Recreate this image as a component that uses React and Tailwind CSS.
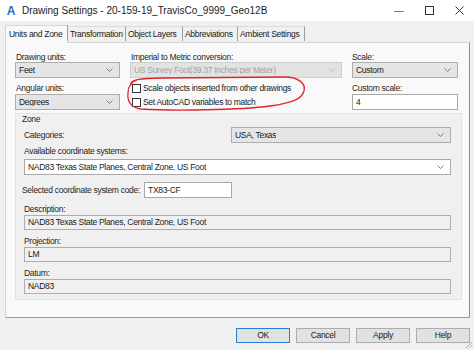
import React from "react";

const FONT = "font-['Liberation_Sans',Arial,sans-serif]";

function Chevron({ color = "#6d6d6d" }) {
  return (
    <svg width="7" height="4" viewBox="0 0 7 4" className="shrink-0">
      <path d="M0.5 0.5 L3.5 3.5 L6.5 0.5" fill="none" stroke={color} strokeWidth="0.9" />
    </svg>
  );
}

function Select({ value, className = "", disabled = false, white = false }) {
  const look = disabled
    ? "bg-[#e2e2e2] border-[#cfcfcf] text-[#a3a3a3]"
    : white
    ? "bg-white border-[#a9a9a9] text-[#1a1a1a]"
    : "bg-[#e5e5e5] border-[#adadad] text-[#1a1a1a]";
  return (
    <div className={`h-[16px] flex items-center justify-between pl-[3px] pr-[6px] border ${look} ${className}`}>
      <span className="leading-none whitespace-nowrap overflow-hidden">{value}</span>
      <Chevron color={disabled ? "#bdbdbd" : "#6d6d6d"} />
    </div>
  );
}

function Label({ children, className = "" }) {
  return <div className={`h-[10px] leading-[10px] whitespace-nowrap text-[#262626] ${className}`}>{children}</div>;
}

function ReadBox({ value }) {
  return (
    <div className="h-[15px] flex items-center pl-[3px] border border-[#adadad] bg-[#f0f0f0] text-[#1a1a1a] leading-none">
      {value}
    </div>
  );
}

function Checkbox({ label, className = "" }) {
  return (
    <div className={`h-[10px] flex items-center gap-[2px] ${className}`}>
      <div className="w-[9px] h-[9px] border border-[#333333] bg-white shrink-0" />
      <span className="leading-none whitespace-nowrap text-[#1a1a1a]">{label}</span>
    </div>
  );
}

function Tab({ label, selected, w }) {
  return selected ? (
    <div
      className={`${w} h-[18px] mb-[-1px] relative z-10 bg-[#f9f9f9] border-l border-t border-[#d6d6d6] flex items-center pl-[3px] text-[#1a1a1a] whitespace-nowrap`}
    >
      {label}
    </div>
  ) : (
    <div
      className={`${w} h-[15px] mb-[1px] border-t border-r border-t-[#dcdcdc] border-r-[#9c9c9c] flex items-center pl-[2px] text-[#1a1a1a] whitespace-nowrap`}
    >
      {label}
    </div>
  );
}

function Button({ label, primary }) {
  return (
    <div
      className={`w-[54px] h-[15px] flex items-center justify-center bg-[#e1e1e1] border leading-none text-[#1a1a1a] ${
        primary ? "border-[#2a7bd2]" : "border-[#adadad]"
      }`}
    >
      {label}
    </div>
  );
}

export default function App() {
  return (
    <div className={`relative w-[474px] h-[350px] overflow-hidden bg-[#f0f0f0] text-[8.5px] tracking-[-0.3px] ${FONT}`}>
      {/* Title bar */}
      <div className="h-[21px] bg-white flex items-center tracking-normal">
        <div className="w-[22px] flex justify-center">
          <span className="text-[12px] font-bold leading-none text-[#1f6cc4]">A</span>
        </div>
        <span className="text-[10px] leading-none text-[#1a1a1a] whitespace-nowrap">
          Drawing Settings - 20-159-19_TravisCo_9999_Geo12B
        </span>
        <div className="ml-auto flex items-center h-full">
          <div className="w-[30px] flex justify-center">
            <svg width="10" height="10" viewBox="0 0 10 10">
              <path d="M0 5.5 H10" stroke="#7a7a7a" strokeWidth="1" />
            </svg>
          </div>
          <div className="w-[30px] flex justify-center">
            <svg width="9" height="9" viewBox="0 0 9 9">
              <rect x="0.5" y="0.5" width="8" height="8" fill="none" stroke="#333" strokeWidth="1" />
            </svg>
          </div>
          <div className="w-[30px] flex justify-center">
            <svg width="9" height="9" viewBox="0 0 9 9">
              <path d="M0.5 0.5 L8.5 8.5 M8.5 0.5 L0.5 8.5" stroke="#333" strokeWidth="1" />
            </svg>
          </div>
        </div>
      </div>

      {/* Tabs */}
      <div className="h-[21px] pl-[5px] flex items-end">
        <Tab label="Units and Zone" selected w="w-[62px]" />
        <div className="w-px h-[16px] mb-[1px] bg-[#9c9c9c]" />
        <Tab label="Transformation" w="w-[58px]" />
        <Tab label="Object Layers" w="w-[57px]" />
        <Tab label="Abbreviations" w="w-[55px]" />
        <Tab label="Ambient Settings" w="w-[67px]" />
      </div>

      {/* Panel */}
      <div className="ml-[5px] w-[465px] h-[276px] bg-[#f9f9f9] border border-[#d6d6d6] border-r-[#8f8f8f] border-b-[#9a9a9a] pl-[9px] pt-[9px]">
        <div className="flex gap-[10px]">
          <div className="w-[105px] flex flex-col">
            <Label className="pl-[1px]">Drawing units:</Label>
            <Select value="Feet" />
            <Label className="mt-[5px] pl-[1px]">Angular units:</Label>
            <Select value="Degrees" className="mt-[1px]" />
          </div>
          <div className="w-[212px] flex flex-col">
            <Label className="pl-[1px]">Imperial to Metric conversion:</Label>
            <Select value="US Survey Foot(39.37 Inches per Meter)" disabled />
            <Checkbox className="mt-[5px] ml-[2px]" label="Scale objects inserted from other drawings" />
            <Checkbox className="mt-[4px] ml-[2px]" label="Set AutoCAD variables to match" />
          </div>
          <div className="w-[106px] flex flex-col">
            <Label>Scale:</Label>
            <Select value="Custom" />
            <Label className="mt-[5px]">Custom scale:</Label>
            <div className="mt-[1px] h-[16px] flex items-center pl-[3px] bg-white border border-[#a9a9a9] text-[#1a1a1a] leading-none">
              4
            </div>
          </div>
        </div>

        {/* Zone group */}
        <div className="mt-[3px] w-[447px] h-[187px] bg-[#f0f0f0] border border-[#e2e2e2] pl-[8px] pr-[10px]">
          <Label className="ml-[-2px]">Zone</Label>
          <div className="mt-[3px] h-[16px] flex items-center">
            <span className="w-[207px] leading-none text-[#262626]">Categories:</span>
            <Select value="USA, Texas" className="flex-1" />
          </div>
          <Label className="mt-[3px]">Available coordinate systems:</Label>
          <Select value="NAD83 Texas State Planes, Central Zone, US Foot" white className="mt-[3px]" />
          <div className="mt-[7px] h-[16px] flex items-center ml-[-2px]">
            <span className="w-[122px] leading-none text-[#262626] whitespace-nowrap">Selected coordinate system code:</span>
            <div className="w-[88px] h-[16px] flex items-center pl-[3px] bg-white border border-[#a9a9a9] leading-none text-[#1a1a1a]">
              TX83-CF
            </div>
          </div>
          <Label className="mt-[6px]">Description:</Label>
          <div className="mt-[1px]">
            <ReadBox value="NAD83 Texas State Planes, Central Zone, US Foot" />
          </div>
          <Label className="mt-[6px]">Projection:</Label>
          <div className="mt-[1px]">
            <ReadBox value="LM" />
          </div>
          <Label className="mt-[6px]">Datum:</Label>
          <div className="mt-[1px]">
            <ReadBox value="NAD83" />
          </div>
        </div>
      </div>

      {/* Buttons */}
      <div className="mt-[10px] pr-[4px] flex justify-end gap-[6px]">
        <Button label="OK" primary />
        <Button label="Cancel" />
        <Button label="Apply" />
        <Button label="Help" />
      </div>

      {/* Resize grip */}
      <svg className="absolute right-[1px] bottom-[1px]" width="8" height="8" viewBox="0 0 8 8">
        <path d="M7 1 L1 7 M7 4 L4 7" stroke="#9a9a9a" strokeWidth="0.8" />
      </svg>

      {/* Red annotation */}
      <svg className="absolute left-0 top-0 pointer-events-none" width="474" height="350" viewBox="0 0 474 350">
        <path
          d="M131 85 C129 80, 140 78, 162 78 L285 77 C299 77, 306 84, 304 91 C302 99, 292 103, 270 106 C240 110, 172 111, 141 109 C131 108, 127 101, 128 93 C128 86, 131 82, 137 80"
          fill="none"
          stroke="#e0242b"
          strokeWidth="1.3"
          strokeLinecap="round"
        />
      </svg>
    </div>
  );
}
